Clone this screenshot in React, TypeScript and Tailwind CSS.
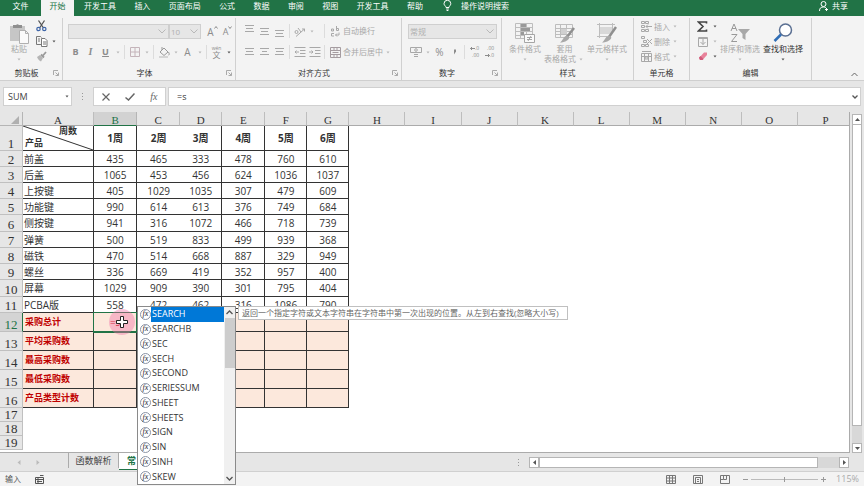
import { useState, type ReactNode } from 'react';

const WEEKS = ['1周', '2周', '3周', '4周', '5周', '6周'];

const PRODUCTS: { name: string; values: number[] }[] = [
  { name: '前盖', values: [435, 465, 333, 478, 760, 610] },
  { name: '后盖', values: [1065, 453, 456, 624, 1036, 1037] },
  { name: '上按键', values: [405, 1029, 1035, 307, 479, 609] },
  { name: '功能键', values: [990, 614, 613, 376, 749, 684] },
  { name: '侧按键', values: [941, 316, 1072, 466, 718, 739] },
  { name: '弹簧', values: [500, 519, 833, 499, 939, 368] },
  { name: '磁铁', values: [470, 514, 668, 887, 329, 949] },
  { name: '螺丝', values: [336, 669, 419, 352, 957, 400] },
  { name: '屏幕', values: [1029, 909, 390, 301, 795, 404] },
  { name: 'PCBA版', values: [558, 472, 462, 316, 1086, 790] },
];

const SUMMARY = ['采购总计', '平均采购数', '最高采购数', '最低采购数', '产品类型计数'];

const FUNCTIONS = [
  'SEARCH', 'SEARCHB', 'SEC', 'SECH', 'SECOND', 'SERIESSUM',
  'SHEET', 'SHEETS', 'SIGN', 'SIN', 'SINH', 'SKEW',
];

const DATA_COLS = ['B', 'C', 'D', 'E', 'F', 'G'];
const EMPTY_COLS = ['H', 'I', 'J', 'K', 'L', 'M', 'N', 'O', 'P'];
const MENU = ['开发工具', '插入', '页面布局', '公式', '数据', '审阅', '视图', '开发工具', '帮助'];

/* ---------- small building blocks ---------- */

function Icon({ w = 12, h = 12, children }: { w?: number; h?: number; children: ReactNode }) {
  return (
    <svg width={w} height={h} viewBox={`0 0 ${w} ${h}`} fill="none" stroke="currentColor" aria-hidden="true" className="shrink-0">
      {children}
    </svg>
  );
}

function Caret({ dark = false }: { dark?: boolean }) {
  return (
    <span className={`flex w-[9px] shrink-0 justify-center ${dark ? 'text-[#555]' : 'text-[#b8b8b8]'}`}>
      <Icon w={4} h={3}>
        <path d="M0.500 0.500h3L2 2.500z" fill="currentColor" stroke="none" />
      </Icon>
    </span>
  );
}

function Sep() {
  return (
    <span className="flex w-[5px] shrink-0 justify-center">
      <span className="h-[14px] w-px bg-[#dcdcdc]" />
    </span>
  );
}

function Tool({ label, children }: { label: string; children: ReactNode }) {
  return (
    <button type="button" aria-label={label} className="flex h-[14px] w-[15px] shrink-0 items-center justify-center">
      {children}
    </button>
  );
}

function Group({ title, className, launcher = false, children }: {
  title: string;
  className: string;
  launcher?: boolean;
  children: ReactNode;
}) {
  return (
    <section aria-label={title} className={`flex h-[62px] shrink-0 flex-col border-r border-[#d0d0d0] ${className}`}>
      <div className="h-[49px] text-[#a8a8a8]">{children}</div>
      <div className="flex h-3 items-center">
        <span className="flex-1 text-center text-[#333]">{title}</span>
        {launcher && (
          <button type="button" aria-label={`${title}设置`} className="mr-[3px] text-[#aaa]">
            <Icon w={6} h={6}>
              <path d="M0.500 5V0.500H5M2.500 2.500l3 3M5.500 2.500v3h-3" />
            </Icon>
          </button>
        )}
      </div>
    </section>
  );
}

function RibbonSelect({ label, value, className }: { label: string; value: string; className: string }) {
  return (
    <div className={`relative h-[15px] ${className}`}>
      <select
        aria-label={label}
        defaultValue={value}
        className="h-full w-full appearance-none border border-[#cfcfcf] bg-[#e6e6e6] pl-px text-[8px] leading-3 text-[#b0b0b0]"
      >
        <option value={value}>{value}</option>
      </select>
      <span className="pointer-events-none absolute top-[5px] right-[3px] text-[#b8b8b8]">
        <Icon w={8} h={5}>
          <path d="M0.500 0.500L4 4L7.500 0.500" />
        </Icon>
      </span>
    </div>
  );
}

function BigTool({ icon, lines, className, dark = false, inlineCaret = false }: {
  icon: ReactNode;
  lines: string[];
  className: string;
  dark?: boolean;
  inlineCaret?: boolean;
}) {
  return (
    <button type="button" className={`flex shrink-0 flex-col items-center pt-1 leading-[10px] whitespace-nowrap ${className}`}>
      <span className="flex h-[22px] items-center">{icon}</span>
      {lines.map((line, i) => (
        <span key={line} className={`flex items-center ${dark ? 'text-[#333]' : ''}`}>
          {line}
          {inlineCaret && i === lines.length - 1 && <Caret />}
        </span>
      ))}
      {!inlineCaret && (
        <span className="flex h-[10px] items-center">
          <Caret dark={dark} />
        </span>
      )}
    </button>
  );
}

function HLines({ widths, top }: { widths: number[]; top: number }) {
  return (
    <Icon w={11} h={12}>
      {widths.map((w, i) => (
        <path key={i} d={`M${(11 - w) / 2} ${top + i * 3 + 0.5}h${w}`} />
      ))}
    </Icon>
  );
}

/* ---------- title tabs ---------- */

function TitleTabs() {
  return (
    <header className="flex h-4 shrink-0 items-center bg-[#217346] text-white">
      <button type="button" className="h-full w-[41px] pb-[5px] leading-[11px]">文件</button>
      <button type="button" className="h-full w-[33px] bg-[#f3f3f3] pb-[5px] leading-[11px] text-[#217346]">开始</button>
      <nav className="ml-[10px] flex h-full w-[339px] justify-between pb-[5px]">
        {MENU.map((m, i) => (
          <button key={i} type="button" className="leading-[11px]">{m}</button>
        ))}
      </nav>
      <button type="button" className="ml-5 flex h-full items-center gap-[9px] pb-[5px]">
        <Icon w={9} h={11}>
          <path d="M3 7.500C3 6 1 5.500 1 3.700A3.300 3.300 0 0 1 7.800 3.700C7.800 5.500 6 6 6 7.500zM3.200 9h2.600M3.600 10.500h1.800" />
        </Icon>
        <span className="leading-[11px]">操作说明搜索</span>
      </button>
      <button type="button" className="mr-4 ml-auto flex h-full items-center gap-1 pb-[5px]">
        <Icon w={9} h={10}>
          <circle cx="4.500" cy="3" r="2.500" />
          <path d="M0.500 10c0-3 1.500-4 4-4 1 0 1.800.2 2.400.6M7.500 7v3M6 8.500h3" />
        </Icon>
        <span className="leading-[11px]">共享</span>
      </button>
    </header>
  );
}

/* ---------- ribbon ---------- */

function Ribbon() {
  return (
    <div className="flex h-[65px] shrink-0 border-b border-[#cfcfcf] bg-[#f3f3f3] pt-[2px]">
      <Group title="剪贴板" className="w-[63px]" launcher>
        <div className="flex pl-1">
          <BigTool
            className="w-[30px]"
            lines={['粘贴']}
            icon={
              <Icon w={20} h={21}>
                <path d="M1 3h15v15H1z" fill="#c6c6c6" stroke="none" />
                <path d="M4 2h3a2 2 0 0 1 3 0h3v3H4z" fill="#8f8f8f" stroke="none" />
                <path d="M10.500 7.500h6l3 3v10h-9zM16.500 7.500v3h3" fill="#fafafa" stroke="#b0b0b0" />
              </Icon>
            }
          />
          <div className="flex flex-col gap-px pt-px text-[#777]">
            <Tool label="剪切">
              <Icon w={11} h={12}>
                <path d="M2.500 0.500L7.500 8M8.500 0.500L3.500 8" stroke="#555" strokeWidth="1.300" />
                <circle cx="2.500" cy="9" r="1.700" stroke="#3f66a8" strokeWidth="1.200" />
                <circle cx="8.300" cy="9" r="1.700" stroke="#3f66a8" strokeWidth="1.200" />
              </Icon>
            </Tool>
            <span className="flex items-center">
              <Tool label="复制">
                <Icon w={12} h={11}>
                  <path d="M5 8.500H0.500v-8h4l1 1M2 3h2M2 5h2" />
                  <path d="M5.500 2.500h3.500l2 2v6H5.500zM7 6h3M7 8h3" fill="#fff" />
                </Icon>
              </Tool>
              <Caret dark />
            </span>
            <Tool label="格式刷">
              <Icon w={11} h={11}>
                <path d="M1 6l3-2 3 3-2 3.500C3 10 2 8 1 6z" fill="#b5b5b5" stroke="none" />
                <path d="M5 3.500l3 3M7 4.500L10 1" stroke="#9a9a9a" strokeWidth="1.800" />
              </Icon>
            </Tool>
          </div>
        </div>
      </Group>

      <Group title="字体" className="w-[173px]" launcher>
        <div className="flex flex-col gap-[6px] pt-[6px] pl-[5px]">
          <div className="flex items-center">
            <RibbonSelect label="字体名称" value="" className="w-[101px]" />
            <RibbonSelect label="字号" value="10" className="w-[32px]" />
            <button type="button" aria-label="增大字号" className="ml-1 flex w-[15px] items-center justify-center text-[10px] leading-[14px] text-[#8c8c8c]">
              A
              <span className="self-start pt-px"><Icon w={4} h={3}><path d="M0.500 2.500L2 0.500l1.500 2" /></Icon></span>
            </button>
            <button type="button" aria-label="减小字号" className="flex w-[15px] items-center justify-center text-[9px] leading-[14px] text-[#8c8c8c]">
              A
              <span className="self-start pt-px"><Icon w={4} h={3}><path d="M0.500 0.500L2 2.500l1.500-2" /></Icon></span>
            </button>
          </div>
          <div className="flex items-center">
            <Tool label="加粗"><span className="text-[9px] font-bold text-[#8c8c8c]">B</span></Tool>
            <Tool label="倾斜"><span className="font-['Liberation_Serif',serif] text-[10px] font-bold text-[#8c8c8c] italic">I</span></Tool>
            <Tool label="下划线"><span className="text-[9px] font-bold text-[#8c8c8c] underline">U</span></Tool>
            <Caret />
            <Sep />
            <Tool label="边框">
              <Icon w={10} h={10}><path d="M0.500 0.500h9v9h-9zM5 0.500v9M0.500 5h9" stroke="#c4b4ba" /></Icon>
            </Tool>
            <Caret />
            <Sep />
            <Tool label="填充颜色">
              <Icon w={12} h={11}>
                <path d="M2 5l4-4 4 4-4 3.500zM4 0v3M10.500 5c1 2 1 3 0 3" stroke="#999" />
                <path d="M1 9h9v2H1z" fill="#d5d5d5" stroke="none" />
              </Icon>
            </Tool>
            <Caret />
            <Tool label="字体颜色"><span className="text-[10px] text-[#8c8c8c]">A</span></Tool>
            <Caret />
            <Sep />
            <Tool label="拼音指南">
              <span className="flex flex-col items-center text-[#8c8c8c]">
                <span className="text-[5px] leading-[5px]">wén</span>
                <span className="text-[8px] leading-[8px]">文</span>
              </span>
            </Tool>
            <Caret dark />
          </div>
        </div>
      </Group>

      <Group title="对齐方式" className="w-[166px]" launcher>
        <div className="flex flex-col gap-[7px] pt-[6px] pl-[6px]">
          <div className="flex h-[14px] items-center">
            <Tool label="顶端对齐"><HLines widths={[9, 7, 9]} top={0} /></Tool>
            <Tool label="垂直居中"><HLines widths={[9, 7, 9]} top={3} /></Tool>
            <Tool label="底端对齐"><HLines widths={[9, 7, 9]} top={5} /></Tool>
            <Sep />
            <Tool label="方向">
              <Icon w={12} h={11}>
                <circle cx="2.500" cy="6" r="1.500" />
                <path d="M4 2l3 4M2 10.500L10.500 3M8 3h2.500v2.500" />
              </Icon>
            </Tool>
            <Caret />
            <span className="w-[6px]" />
            <Sep />
            <button type="button" className="ml-1 flex items-center gap-[3px]">
              <Icon w={9} h={11}>
                <path d="M0.500 3h2v2h-2zM5.500 0v4.500h2v-2h-2M3 7.500H0.500V10H3M8 6.500V9H4.500M6 7.500L4.500 9 6 10.500" />
              </Icon>
              自动换行
            </button>
          </div>
          <div className="flex h-[14px] items-center">
            <Tool label="左对齐"><HLines widths={[9, 7, 9]} top={2} /></Tool>
            <Tool label="居中"><HLines widths={[9, 5, 9]} top={2} /></Tool>
            <Tool label="右对齐"><HLines widths={[9, 7, 9]} top={2} /></Tool>
            <Sep />
            <Tool label="减少缩进">
              <Icon w={12} h={10}><path d="M0.500 0.500h11M6 3.500h5.500M6 6.500h5.500M0.500 9.500h11M5 5H1M2.500 3.500L1 5l1.500 1.500" /></Icon>
            </Tool>
            <Tool label="增加缩进">
              <Icon w={12} h={10}><path d="M0.500 0.500h11M6 3.500h5.500M6 6.500h5.500M0.500 9.500h11M0 5h4M2.500 3.500L4 5 2.500 6.500" /></Icon>
            </Tool>
            <Sep />
            <button type="button" className="ml-[3px] flex items-center gap-[2px]">
              <Icon w={11} h={11}>
                <path d="M0.500 0.500h10v10h-10zM0.500 3.500h10M0.500 7.500h10M4 0.500v3M7 0.500v3M4 7.500v3M7 7.500v3M2.500 5.500h6" stroke="#a59ca0" />
              </Icon>
              合并后居中
            </button>
            <Caret />
          </div>
        </div>
      </Group>

      <Group title="数字" className="w-[100px]" launcher>
        <div className="flex flex-col gap-[6px] pt-[6px] pl-[6px]">
          <RibbonSelect label="数字格式" value="常规" className="w-[89px]" />
          <div className="flex items-center">
            <Tool label="会计数字格式">
              <Icon w={12} h={10}>
                <path d="M0.500 0.500h11v5h-11z" />
                <circle cx="6" cy="3" r="1.300" />
                <path d="M4 7.500h4M4 9.500h4" />
              </Icon>
            </Tool>
            <Caret />
            <Tool label="百分比样式"><span className="text-[10px] text-[#8c8c8c]">%</span></Tool>
            <Tool label="千位分隔样式">
              <Icon w={4} h={6}><path d="M1 0.500h2v2L1 5.500V3z" fill="#8c8c8c" stroke="none" /></Icon>
            </Tool>
            <Sep />
            <Tool label="增加小数位数">
              <span className="flex flex-col items-end text-[5px] leading-[7px] text-[#8c8c8c]">
                <span className="flex items-center"><Icon w={5} h={5}><path d="M5 2.500H0.500M2 1L0.500 2.500 2 4" /></Icon>.0</span>
                <span>.00</span>
              </span>
            </Tool>
            <Tool label="减少小数位数">
              <span className="flex flex-col items-end text-[5px] leading-[7px] text-[#8c8c8c]">
                <span>.00</span>
                <span className="flex items-center"><Icon w={5} h={5}><path d="M0 2.500h4.500M3 1l1.500 1.500L3 4" /></Icon>.0</span>
              </span>
            </Tool>
          </div>
        </div>
      </Group>

      <Group title="样式" className="w-[132px]">
        <div className="flex pl-[3px]">
          <BigTool
            className="w-10"
            lines={['条件格式']}
            icon={
              <Icon w={20} h={20}>
                <path d="M0.500 0.500h17v15h-17zM0.500 4.500h17M0.500 8.500h17M0.500 12.500h17M5.500 0.500v15M11.500 0.500v15" stroke="#bdbdbd" />
                <path d="M6 1h5v3H6zM6 5h9v3H6zM6 9h3v3H6z" fill="#999" stroke="none" />
                <path d="M9.500 11.500h10v8h-10zM12 14.500h5M12 16.500h5M16 13l-3 5" fill="#fafafa" stroke="#a5a5a5" />
              </Icon>
            }
          />
          <BigTool
            className="w-[39px]"
            lines={['套用', '表格格式']}
            inlineCaret
            icon={
              <Icon w={20} h={20}>
                <path d="M0.500 1.500h17v13h-17zM0.500 5.500h17M0.500 8.500h17M0.500 11.500h17M5.500 1.500v13M11.500 1.500v13" stroke="#bdbdbd" />
                <path d="M6 6h6v5H6z" fill="#d0d0d0" stroke="none" />
                <path d="M19 5L12 14" stroke="#8f8f8f" strokeWidth="2.500" />
                <path d="M12 12.500c3 1 3 3 0 5-2 1.500-5 2-7 2 3-2 3-6 7-7z" fill="#a8a8a8" stroke="none" />
              </Icon>
            }
          />
          <BigTool
            className="w-[46px]"
            lines={['单元格样式']}
            icon={
              <Icon w={20} h={20}>
                <path d="M0 1.500h18M0 13.500h10M2.500 0v15M15.500 0v8M2.500 5.500h13v-4" stroke="#bdbdbd" />
                <path d="M3 4h12v7H3z" fill="#d8d8d8" stroke="none" />
                <path d="M19 4L12 14" stroke="#8f8f8f" strokeWidth="2.500" />
                <path d="M12 12.500c3 1 3 3 0 5-2 1.500-5 2-7 2 3-2 3-6 7-7z" fill="#a8a8a8" stroke="none" />
              </Icon>
            }
          />
        </div>
      </Group>

      <Group title="单元格" className="w-14">
        <div className="flex flex-col pt-px pl-[7px]">
          {['插入', '删除', '格式'].map((name) => (
            <span key={name} className="flex h-[15px] items-center">
              <button type="button" className="flex items-center gap-[2px]">
                <Icon w={11} h={11}>
                  {name === '插入' && <path d="M0.500 0.500h3v2h-3zM4.500 0.500h3v2h-3zM0.500 8.500h3v2h-3zM4.500 8.500h3v2h-3zM0.500 4.500h3v2h-3zM5 5.500h6M7 3.500l-2 2 2 2" />}
                  {name === '删除' && <path d="M0.500 0.500h3v2h-3zM0.500 8.500h3v2h-3zM4.500 8.500h3v2h-3zM2.500 4.500h3v2h-3zM6 3l5 5M11 3L6 8" />}
                  {name === '格式' && <path d="M0.500 2.500h10v8h-10zM0.500 5.500h10M3.500 2.500v8M7.500 2.500v8M1 0.500h9M4 6h3v2H4z" />}
                </Icon>
                {name}
              </button>
              <Caret />
            </span>
          ))}
        </div>
      </Group>

      <Group title="编辑" className="w-[122px]">
        <div className="flex pl-[5px]">
          <div className="flex flex-col pt-px">
            <span className="flex h-[15px] items-center">
              <Tool label="自动求和">
                <Icon w={11} h={11}><path d="M9.500 2.500V1H1.500L6 5.500 1.500 10h8V8.500" stroke="#444" strokeWidth="1.600" /></Icon>
              </Tool>
              <Caret dark />
            </span>
            <span className="flex h-[15px] items-center">
              <Tool label="填充">
                <Icon w={10} h={10}><path d="M0.500 0.500h9v9h-9zM5 2v5.500M2.500 5L5 7.500 7.500 5M0.500 1.500h9" /></Icon>
              </Tool>
              <Caret />
            </span>
            <span className="flex h-[15px] items-center">
              <Tool label="清除">
                <Icon w={10} h={9}>
                  <path d="M1 6l5-5.500h3L9 3 4.500 8H2z" fill="#e8829a" stroke="none" />
                  <path d="M1 5.500L2.500 4 5.500 7 4.500 8H2z" fill="#d05a7a" stroke="none" />
                </Icon>
              </Tool>
              <Caret dark />
            </span>
          </div>
          <BigTool
            className="w-[42px]"
            lines={['排序和筛选']}
            icon={
              <Icon w={20} h={20}>
                <path d="M1 8L4 1l3 7M2 5.500h4M1.500 11.500H7L1.500 18.500H7" stroke="#999" />
                <path d="M8 6h12l-4.500 5v6l-3-2v-4z" fill="#a8a8a8" stroke="none" />
              </Icon>
            }
          />
          <BigTool
            dark
            className="w-11"
            lines={['查找和选择']}
            icon={
              <Icon w={20} h={20}>
                <circle cx="12.500" cy="7" r="6" stroke="#5a6f92" strokeWidth="1.500" fill="#fff" />
                <path d="M8 11.500L1.500 18" stroke="#2f6db5" strokeWidth="2.500" />
              </Icon>
            }
          />
        </div>
      </Group>

      <button type="button" aria-label="折叠功能区" className="mr-[6px] mb-[3px] ml-auto self-end text-[#666]">
        <Icon w={7} h={5}><path d="M0.500 4L3.500 1l3 3" /></Icon>
      </button>
    </div>
  );
}

/* ---------- formula bar ---------- */

function FormulaBar({ formula, onChange }: { formula: string; onChange: (v: string) => void }) {
  return (
    <div className="flex h-[31px] shrink-0 items-center px-[3px] py-[6px]">
      <div className="flex h-[19px] w-[69px] items-center border border-[#d0d0d0] bg-white">
        <input aria-label="名称框" defaultValue="SUM" className="w-full min-w-0 flex-1 pl-1 text-[9px] text-[#444] outline-none" />
        <Caret dark />
      </div>
      <span className="flex w-[21px] flex-col items-center gap-[2px]">
        <i className="size-px bg-[#999]" />
        <i className="size-px bg-[#999]" />
        <i className="size-px bg-[#999]" />
      </span>
      <div className="flex h-[19px] w-[73px] items-center justify-around border border-[#d0d0d0] bg-white text-[#666]">
        <button type="button" aria-label="取消">
          <Icon w={8} h={8}><path d="M0.500 0.500l7 7M7.500 0.500l-7 7" strokeWidth="1.200" /></Icon>
        </button>
        <button type="button" aria-label="输入">
          <Icon w={10} h={8}><path d="M0.500 4.500l3 2.500 6-6.500" strokeWidth="1.500" /></Icon>
        </button>
        <button type="button" aria-label="插入函数" className="font-['Liberation_Serif',serif] text-[10px] italic">fx</button>
      </div>
      <div className="ml-[2px] flex h-[19px] flex-1 items-center border border-[#d0d0d0] bg-white">
        <input
          aria-label="编辑栏"
          value={formula}
          onChange={(e) => onChange(e.target.value)}
          className="min-w-0 flex-1 pl-2 text-[9px] text-[#333] outline-none"
        />
        <span className="mr-[2px] text-[#555]">
          <Icon w={6} h={4}><path d="M0.500 0.500L3 3l2.500-2.500" strokeWidth="1.300" /></Icon>
        </span>
      </div>
    </div>
  );
}

/* ---------- sheet ---------- */

function RowHead({ n, active = false }: { n: number; active?: boolean }) {
  return (
    <th
      scope="row"
      className={`border-r border-b p-0 text-center align-bottom font-['Liberation_Serif',serif] text-[13px] leading-3 font-normal ${
        active ? 'border-r-[#217346] border-b-[#c0c0c0] bg-[#d4d4d4] text-[#217346]' : 'border-[#c0c0c0] bg-[#e6e6e6] text-[#333]'
      }`}
    >
      {n}
    </th>
  );
}

const ruleFor = (i: number) => (i === 1 ? 'border-r-0' : 'border-r');

function Sheet({ formula, onChange }: { formula: string; onChange: (v: string) => void }) {
  return (
    <div className="min-w-0 flex-1 overflow-hidden border-r border-b border-[#ababab] bg-white">
      <table className="w-[854px] table-fixed border-separate border-spacing-0">
        <colgroup>
          <col className="w-[23px]" />
          <col className="w-[71px]" />
          <col className="w-[43px]" />
          <col className="w-[43px]" />
          <col className="w-[42px]" />
          <col className="w-[43px]" />
          <col className="w-[42px]" />
          <col className="w-[42px]" />
          {EMPTY_COLS.map((c) => <col key={c} className="w-[56px]" />)}
        </colgroup>
        <thead>
          <tr className="h-[14px]">
            <td className="border-r border-b border-[#b5b5b5] bg-[#e6e6e6] p-0 align-bottom">
              <span className="flex justify-end pr-[3px] pb-px text-[#b0b0b0]">
                <Icon w={8} h={8}><path d="M8 0v8H0z" fill="currentColor" stroke="none" /></Icon>
              </span>
            </td>
            {['A', ...DATA_COLS, ...EMPTY_COLS].map((c) => (
              <th
                key={c}
                scope="col"
                className={`border-r border-b p-0 align-bottom font-['Liberation_Serif',serif] text-[11px] leading-[10px] font-normal ${
                  c === 'B'
                    ? 'border-r-[#b5b5b5] border-b-[#217346] bg-[#d2d2d2] text-[#217346]'
                    : 'border-r-[#bdbdbd] border-b-[#ababab] bg-[#e6e6e6] text-[#333]'
                }`}
              >
                {c}
              </th>
            ))}
          </tr>
        </thead>
        <tbody className="text-[10px] leading-3 text-[#333]">
          <tr className="h-[25px]">
            <RowHead n={1} />
            <th scope="col" className="relative border-r border-b border-[#333] p-0 font-bold">
              <svg className="absolute inset-0 h-full w-full" viewBox="0 0 70 24" preserveAspectRatio="none" aria-hidden="true">
                <path d="M0 0L70 24" stroke="#333" strokeWidth="1" />
              </svg>
              <span className="flex flex-col text-[9px]">
                <span className="pr-4 text-right leading-[10px]">周数</span>
                <span className="pl-[2px] text-left leading-[14px]">产品</span>
              </span>
            </th>
            {WEEKS.map((w, i) => (
              <th key={w} scope="col" className={`border-b border-[#333] p-0 font-bold ${ruleFor(i)}`}>{w}</th>
            ))}
          </tr>
          {PRODUCTS.map((p, r) => (
            <tr key={p.name} className={r === 4 || r === 8 ? 'h-[17px]' : 'h-4'}>
              <RowHead n={r + 2} />
              <td className="border-r border-b border-[#333] p-0 pl-px">{p.name}</td>
              {p.values.map((v, i) => (
                <td key={i} className={`border-b border-[#333] p-0 text-center ${ruleFor(i)}`}>{v}</td>
              ))}
            </tr>
          ))}
          {SUMMARY.map((name, r) => (
            <tr key={name} className="h-[19px]">
              <RowHead n={r + 12} active={r === 0} />
              <td className="border-r border-b border-[#333] bg-[#fce8dc] p-0 pl-[2px] text-[9px] font-bold text-[#c00000]">{name}</td>
              {DATA_COLS.map((c, i) =>
                r === 0 && i === 0 ? (
                  <td key={c} className="relative border-r border-b border-[#217346] bg-[#fce8dc] p-0 outline outline-[#217346]">
                    <input
                      aria-label="B12"
                      value={formula}
                      onChange={(e) => onChange(e.target.value)}
                      className="block h-4 w-full text-center text-[10px] text-[#c00000] outline-none"
                    />
                    <span className="pointer-events-none absolute -top-[4px] left-[15px] size-[26px] rounded-full bg-[#f06fa5]/40" />
                    <span className="pointer-events-none absolute top-[3px] left-[22px]">
                      <Icon w={12} h={12}>
                        <path d="M4.500 0.500h3v4h4v3h-4v4h-3v-4h-4v-3h4z" fill="#fff" stroke="#222" />
                      </Icon>
                    </span>
                  </td>
                ) : (
                  <td key={c} className="border-r border-b border-[#333] bg-[#fce8dc] p-0" />
                ),
              )}
            </tr>
          ))}
          {[17, 18, 19].map((n) => (
            <tr key={n} className="h-[14px]">
              <RowHead n={n} />
            </tr>
          ))}
        </tbody>
      </table>
    </div>
  );
}

function ArrowButton({ label, d, className }: { label: string; d: string; className: string }) {
  return (
    <button
      type="button"
      aria-label={label}
      className={`flex shrink-0 items-center justify-center border border-[#b5b5b5] bg-white text-[#555] ${className}`}
    >
      <Icon w={5} h={5}><path d={d} fill="currentColor" stroke="none" /></Icon>
    </button>
  );
}

function VerticalScroll() {
  return (
    <div className="mx-[2px] mt-[2px] flex w-[10px] shrink-0 flex-col bg-[#d8d8d8]">
      <ArrowButton label="向上" d="M0 4L2.500 1 5 4z" className="h-[11px]" />
      <div className="flex-1 border-x border-b border-[#b5b5b5] bg-white" />
      <div className="h-[17px]" />
      <ArrowButton label="向下" d="M0 1h5L2.500 4z" className="h-[10px]" />
    </div>
  );
}

/* ---------- bottom bars ---------- */

function SheetTabs() {
  return (
    <div className="flex h-[18px] shrink-0 items-center text-[9px]">
      <div className="flex w-[68px] items-center gap-[15px] pl-[17px] text-[#bbb]">
        <Icon w={4} h={5}><path d="M3.500 0v5L0.500 2.500z" fill="currentColor" stroke="none" /></Icon>
        <Icon w={4} h={5}><path d="M0.500 0v5L3.500 2.500z" fill="currentColor" stroke="none" /></Icon>
      </div>
      <button type="button" className="h-[15px] w-[51px] self-start border-x border-[#ababab] text-[#444]">函数解析</button>
      <button type="button" className="h-[17px] w-[90px] self-start border-b border-[#217346] bg-white pl-2 text-left font-bold text-[#217346]">
        常
      </button>
      <span className="ml-auto flex w-[8px] flex-col items-center gap-[2px]">
        <i className="size-px bg-[#999]" />
        <i className="size-px bg-[#999]" />
        <i className="size-px bg-[#999]" />
      </span>
      <div className="mr-[15px] ml-[7px] flex h-[11px] w-[37%] bg-[#d8d8d8]">
        <ArrowButton label="向左" d="M4 0v5L1 2.500z" className="w-[10px]" />
        <div className="flex-1 border border-[#b5b5b5] bg-white" />
        <div className="w-[21px]" />
        <ArrowButton label="向右" d="M1 0v5l3-2.500z" className="w-[10px]" />
      </div>
    </div>
  );
}

function StatusBar() {
  return (
    <footer className="flex h-[15px] shrink-0 items-center border-t border-[#d0d0d0] bg-[#f3f3f3] px-[5px] text-[#555]">
      <span>输入</span>
      <span className="ml-[14px]">
        <Icon w={9} h={9}><path d="M0.500 2.500h8v6h-8zM0.500 4.500h8M3 2.500v6M5 0.500h3.500M2 6.500h5" /></Icon>
      </span>
      <div className="ml-auto flex items-center gap-[17px] text-[#777]">
        <button type="button" aria-label="普通"><Icon w={10} h={9}><path d="M0.500 0.500h9v8h-9zM0.500 3h9M0.500 6h9M3.500 0.500v8M6.500 0.500v8" /></Icon></button>
        <button type="button" aria-label="页面布局视图"><Icon w={10} h={9}><path d="M0.500 0.500h9v8h-9zM2.500 2.500h5v6M2.500 2.500v6M4 4.500h2M4 6.500h2" /></Icon></button>
        <button type="button" aria-label="分页预览"><Icon w={10} h={9}><path d="M0.500 0.500h9v8h-9zM3.500 0.500v4h3v-4M0.500 4.500h3" /></Icon></button>
      </div>
      <button type="button" aria-label="缩小" className="ml-[13px] text-[#999]"><Icon w={5} h={5}><path d="M0 2.500h5" /></Icon></button>
      <input
        type="range"
        aria-label="显示比例"
        min={10}
        max={220}
        defaultValue={115}
        className="mx-[3px] h-px w-[67px] appearance-none bg-[#bbb] [&::-webkit-slider-thumb]:h-[5px] [&::-webkit-slider-thumb]:w-px [&::-webkit-slider-thumb]:appearance-none [&::-webkit-slider-thumb]:bg-[#999]"
      />
      <button type="button" aria-label="放大" className="text-[#999]"><Icon w={5} h={5}><path d="M0 2.500h5M2.500 0v5" /></Icon></button>
      <span className="ml-[10px] text-[9px] text-[#aaa]">115%</span>
    </footer>
  );
}

/* ---------- function suggestions ---------- */

function Suggestions() {
  const [picked, setPicked] = useState('SEARCH');
  return (
    <div className="absolute top-[306px] left-[137px] z-10 flex items-start">
      <div className="flex h-[179px] w-[99px] border border-[#8a8a8a] bg-white">
        <ul className="grid flex-1 grid-rows-12">
          {FUNCTIONS.map((f) => (
            <li key={f} className="min-h-0">
              <button type="button" onClick={() => setPicked(f)} className="flex h-full w-full items-center pl-[2px] text-[9px]">
                <span className="flex size-[11px] shrink-0 items-center justify-center rounded-full border border-[#8a93a5] font-['Liberation_Serif',serif] text-[8px] leading-none text-[#223] italic">
                  fx
                </span>
                <span className={`flex h-full flex-1 items-center pl-px ${f === picked ? 'bg-[#0078d7] text-white' : 'text-[#333]'}`}>{f}</span>
              </button>
            </li>
          ))}
        </ul>
        <div className="flex w-[11px] flex-col items-center justify-between bg-[#f0f0f0] py-[3px] text-[#555]">
          <Icon w={7} h={5}><path d="M0.500 4L3.500 1l3 3" strokeWidth="1.300" /></Icon>
          <span className="mt-[3px] mb-auto h-[50px] w-[10px] bg-[#cdcdcd]" />
          <Icon w={7} h={5}><path d="M0.500 1L3.500 4l3-3" strokeWidth="1.300" /></Icon>
        </div>
      </div>
      <div role="tooltip" className="ml-[2px] border border-[#c0c0c0] bg-white pr-2 pl-[3px] leading-3 whitespace-nowrap text-[#666]">
        返回一个指定字符或文本字符串在字符串中第一次出现的位置。从左到右查找(忽略大小写)
      </div>
    </div>
  );
}

export default function App() {
  const [formula, setFormula] = useState('=s');

  return (
    <div className="relative flex h-screen flex-col overflow-hidden bg-[#e6e6e6] font-['Open_Sans','Noto_Sans_CJK_SC',sans-serif] text-[8px] leading-[10px]">
      <TitleTabs />
      <Ribbon />
      <FormulaBar formula={formula} onChange={setFormula} />
      <main className="flex min-h-0 flex-1">
        <Sheet formula={formula} onChange={setFormula} />
        <VerticalScroll />
      </main>
      <SheetTabs />
      <StatusBar />
      <Suggestions />
    </div>
  );
}
